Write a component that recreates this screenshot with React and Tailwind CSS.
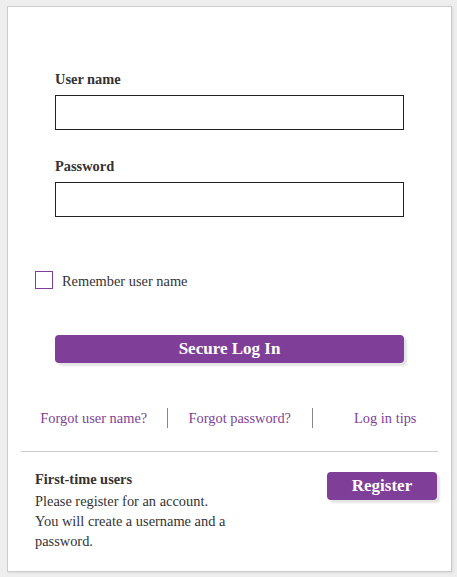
// App.jsx

function Champ({ label, type = "text" }) {
    return (
        <div>
            <label className="block font-bold text-[#333] mb-[6px]">{label}</label>
            <input
                type={type}
                className="block w-full h-[35px] border border-[#222] bg-white px-2 outline-none"
            />
        </div>
    );
}

export default function App() {
    return (
        <div
            className="min-h-screen bg-[#eeeeee] pt-[6px] pl-[7px] pb-[6px]"
            style={{ fontFamily: '"Liberation Serif", "Times New Roman", serif' }}
        >
            <div className="w-[445px] bg-white border border-[#cccccc] shadow-[1px_1px_2px_rgba(0,0,0,0.08)]
                            px-[13px] pt-[62px] pb-[20px] text-[14.4px] leading-[20px] text-[#333] overflow-hidden">

                {/* Formulaire */}
                <div className="px-[34px] flex flex-col gap-[26px]">
                    <Champ label="User name" />
                    <Champ label="Password" type="password" />
                </div>

                <label className="flex items-center gap-[9px] mt-[54px] pl-[14px] h-[18px]">
                    <span className="w-[18px] h-[18px] border border-[#7f3f98] bg-white shrink-0" />
                    <span className="text-[#333] text-[14.4px] pt-[2px]">Remember user name</span>
                </label>

                <div className="px-[34px] mt-[46px]">
                    <button className="w-full h-[28px] rounded-[4px] bg-[#7f3f98] text-white font-bold
                                       text-[17px] leading-[28px] shadow-[3px_3px_2px_#e4e4e4]">
                        Secure Log In
                    </button>
                </div>

                {/* Liens */}
                <div className="flex mt-[45px] text-[#7f3f98]">
                    <a href="#" className="w-[145.5px] shrink-0 text-center">Forgot user name?</a>
                    <a href="#" className="w-[145.5px] shrink-0 text-center border-l border-[#888]">Forgot password?</a>
                    <a href="#" className="w-[145.5px] shrink-0 text-center border-l border-[#888]">Log in tips</a>
                </div>

                <hr className="mt-[23px] border-0 border-t border-[#cccccc]" />

                {/* Nouveaux utilisateurs */}
                <div className="flex mt-[17px]">
                    <div className="w-1/2 pl-[14px] shrink-0">
                        <p className="font-bold">First-time users</p>
                        <p className="mt-[2px]">Please register for an account. You will create a username and a password.</p>
                    </div>
                    <div className="flex-1 flex justify-end items-start">
                        <button className="mt-[3px] mr-[1px] w-[110px] h-[28px] rounded-[4px] bg-[#7f3f98] text-white
                                           font-bold text-[17px] leading-[28px] shadow-[3px_3px_2px_#e4e4e4]">
                            Register
                        </button>
                    </div>
                </div>
            </div>
        </div>
    );
}
